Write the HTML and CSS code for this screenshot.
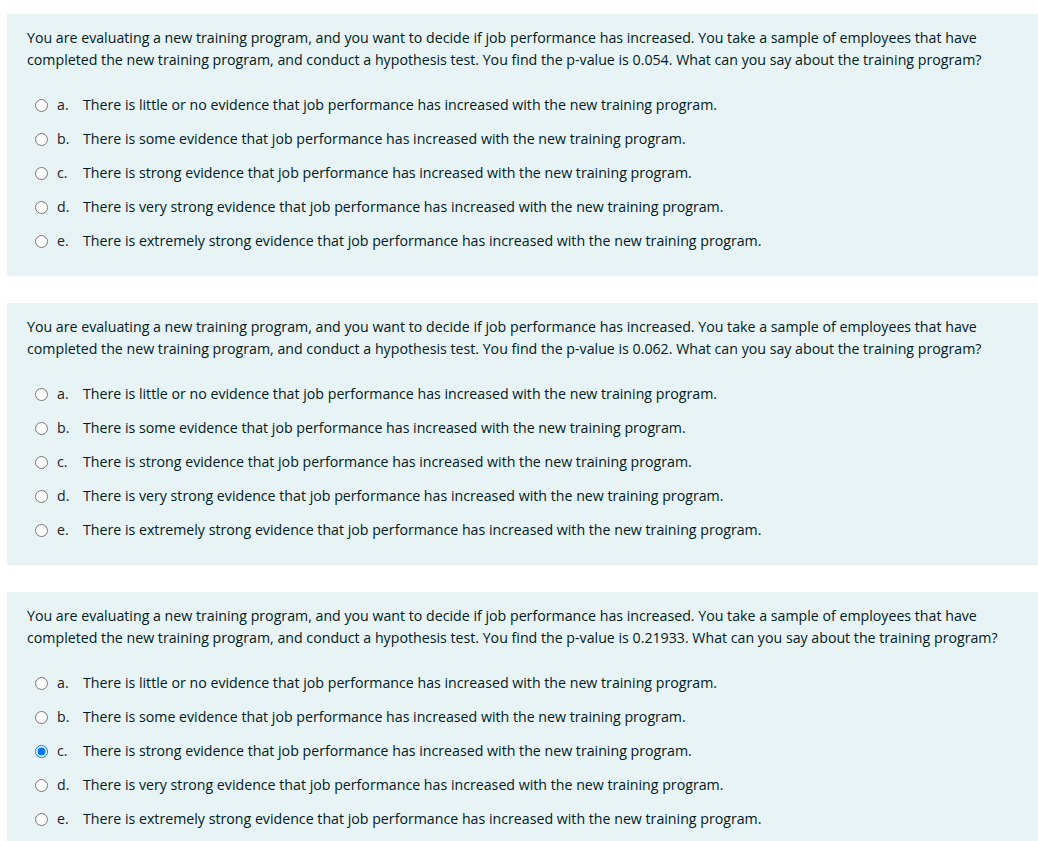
FILE: index.html
```html
<!DOCTYPE html>
<html>
<head>
<meta charset="utf-8">
<link rel="stylesheet" href="styles.css">
</head>
<body>
<div class="page">
  <div class="que">
    <div class="qtext">You are evaluating a new training program, and you want to decide if job performance has increased. You take a sample of employees that have completed the new training program, and conduct a hypothesis test. You find the p-value is 0.054. What can you say about the training program?</div>
    <div class="answer">
      <label class="opt"><input type="radio" name="q1"><span class="letter">a.</span><span class="label">There is little or no evidence that job performance has increased with the new training program.</span></label>
      <label class="opt"><input type="radio" name="q1"><span class="letter">b.</span><span class="label">There is some evidence that job performance has increased with the new training program.</span></label>
      <label class="opt"><input type="radio" name="q1"><span class="letter">c.</span><span class="label">There is strong evidence that job performance has increased with the new training program.</span></label>
      <label class="opt"><input type="radio" name="q1"><span class="letter">d.</span><span class="label">There is very strong evidence that job performance has increased with the new training program.</span></label>
      <label class="opt"><input type="radio" name="q1"><span class="letter">e.</span><span class="label">There is extremely strong evidence that job performance has increased with the new training program.</span></label>
    </div>
  </div>
  <div class="que">
    <div class="qtext">You are evaluating a new training program, and you want to decide if job performance has increased. You take a sample of employees that have completed the new training program, and conduct a hypothesis test. You find the p-value is 0.062. What can you say about the training program?</div>
    <div class="answer">
      <label class="opt"><input type="radio" name="q2"><span class="letter">a.</span><span class="label">There is little or no evidence that job performance has increased with the new training program.</span></label>
      <label class="opt"><input type="radio" name="q2"><span class="letter">b.</span><span class="label">There is some evidence that job performance has increased with the new training program.</span></label>
      <label class="opt"><input type="radio" name="q2"><span class="letter">c.</span><span class="label">There is strong evidence that job performance has increased with the new training program.</span></label>
      <label class="opt"><input type="radio" name="q2"><span class="letter">d.</span><span class="label">There is very strong evidence that job performance has increased with the new training program.</span></label>
      <label class="opt"><input type="radio" name="q2"><span class="letter">e.</span><span class="label">There is extremely strong evidence that job performance has increased with the new training program.</span></label>
    </div>
  </div>
  <div class="que">
    <div class="qtext">You are evaluating a new training program, and you want to decide if job performance has increased. You take a sample of employees that have completed the new training program, and conduct a hypothesis test. You find the p-value is 0.21933. What can you say about the training program?</div>
    <div class="answer">
      <label class="opt"><input type="radio" name="q3"><span class="letter">a.</span><span class="label">There is little or no evidence that job performance has increased with the new training program.</span></label>
      <label class="opt"><input type="radio" name="q3"><span class="letter">b.</span><span class="label">There is some evidence that job performance has increased with the new training program.</span></label>
      <label class="opt"><input type="radio" name="q3" checked><span class="letter">c.</span><span class="label">There is strong evidence that job performance has increased with the new training program.</span></label>
      <label class="opt"><input type="radio" name="q3"><span class="letter">d.</span><span class="label">There is very strong evidence that job performance has increased with the new training program.</span></label>
      <label class="opt"><input type="radio" name="q3"><span class="letter">e.</span><span class="label">There is extremely strong evidence that job performance has increased with the new training program.</span></label>
    </div>
  </div>
</div>
</body>
</html>
```
FILE: styles.css
```css
html, body {
  margin: 0;
  padding: 0;
  background: #ffffff;
  overflow: hidden;
}
.page {
  padding: 14px 0 0 7px;
  display: flex;
  flex-direction: column;
  gap: 27px;
  font-family: "Open Sans", "Noto Sans", sans-serif;
  font-size: 14.2px;
  color: #001a1e;
}
.que {
  background: #e7f3f5;
  padding: 13px 20px 18px 20px;
}
.qtext {
  line-height: 22px;
  margin-bottom: 17px;
}
.answer {
  display: flex;
  flex-direction: column;
}
.opt {
  display: flex;
  align-items: center;
  height: 34px;
  line-height: 22px;
}
.opt input {
  margin: 0 0 0 8px;
  width: 13px;
  height: 13px;
  flex: none;
}
.letter {
  width: 26px;
  margin-left: 9px;
  color: #1d2125;
  flex: none;
}
.label {
  color: #001a1e;
}
```
